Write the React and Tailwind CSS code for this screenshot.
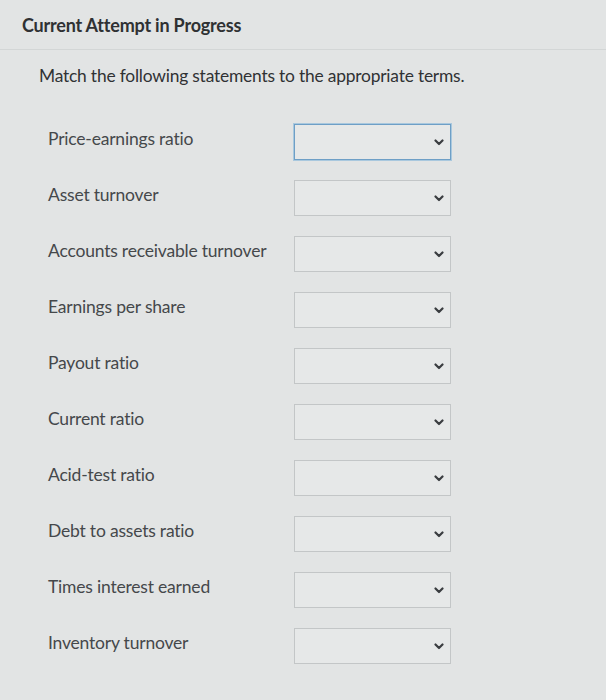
const terms = [
  'Price-earnings ratio',
  'Asset turnover',
  'Accounts receivable turnover',
  'Earnings per share',
  'Payout ratio',
  'Current ratio',
  'Acid-test ratio',
  'Debt to assets ratio',
  'Times interest earned',
  'Inventory turnover',
]

function Chevron() {
  return (
    <svg width="10" height="7" viewBox="0 0 10 7" className="text-[#3a3d40]">
      <path d="M1.5 1.5 L5 5 L8.5 1.5" fill="none" stroke="currentColor" strokeWidth="2.2" strokeLinecap="round" strokeLinejoin="round" />
    </svg>
  )
}

function MatchSelect({ focused }) {
  return (
    <div
      className={`w-[157px] h-[36px] flex items-center justify-end pr-[6px] bg-[#e6e8e8] border ${
        focused ? 'border-[#6e9fc6] shadow-[0_0_0_1px_#a9c8de]' : 'border-[#c3c6c7]'
      }`}
    >
      <Chevron />
    </div>
  )
}

export default function App() {
  return (
    <div className="min-h-screen bg-[#e2e4e4] text-[#3d3f41]" style={{ fontFamily: 'Lato, "Open Sans", sans-serif' }}>
      <div className="pl-[22px] pt-[14px] pb-[13px] border-b border-[#d3d6d6]">
        <h2 className="text-[18px] font-bold text-[#2f3133] leading-[22px] tracking-[-0.2px]">Current Attempt in Progress</h2>
      </div>
      <p className="pl-[39px] pt-[15px] text-[17.4px] text-[#303234] leading-[22px] tracking-[-0.2px]">
        Match the following statements to the appropriate terms.
      </p>
      <ul className="pl-[48px] pt-[27px]">
        {terms.map((term, i) => (
          <li key={term} className="flex items-center h-[56px]">
            <span className="w-[246px] text-[17.5px] text-[#45484b] pb-[6px] tracking-[-0.2px]">{term}</span>
            <MatchSelect focused={i === 0} />
          </li>
        ))}
      </ul>
    </div>
  )
}
